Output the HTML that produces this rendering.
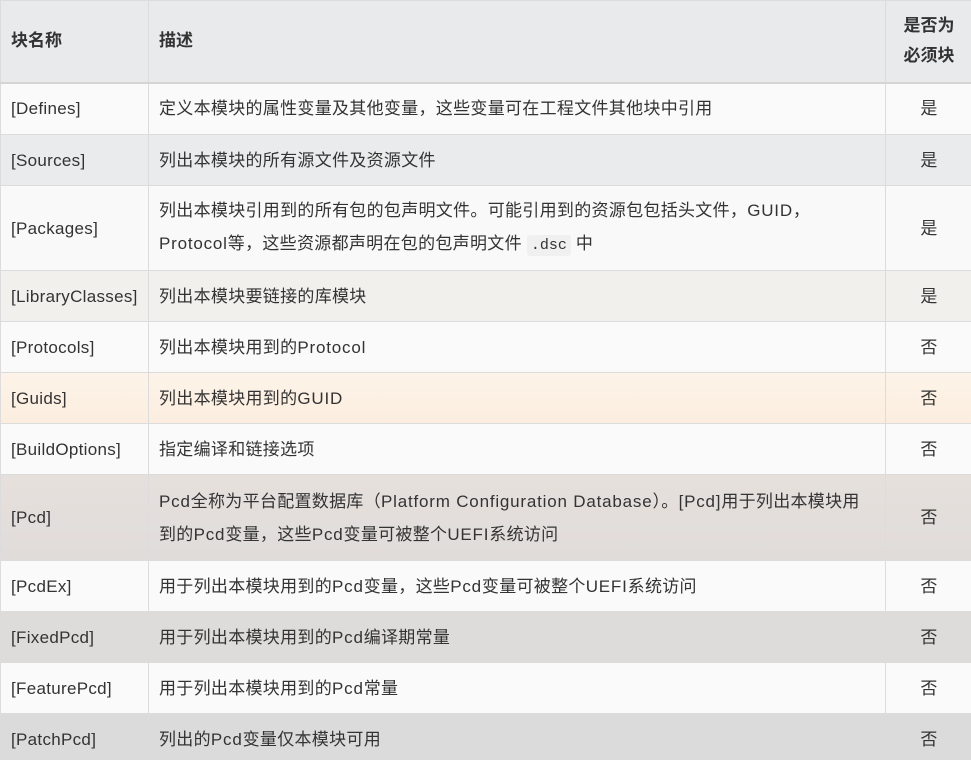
<!DOCTYPE html>
<html><head><meta charset="utf-8"><style>
html,body{margin:0;padding:0;width:971px;height:760px;overflow:hidden;background:#fafafa;}
table{border-collapse:collapse;table-layout:fixed;width:972px;font-family:"Liberation Sans","Noto Sans CJK SC",sans-serif;font-size:17px;letter-spacing:0.3px;color:#333;}
td,th{border:1px solid #dcdcdc;padding:0 10px;line-height:33px;text-align:left;vertical-align:middle;white-space:nowrap;overflow:hidden;}
th{font-weight:bold;font-size:17px;color:#333;line-height:30px;letter-spacing:0;}
tr.h th{border-bottom:2px solid #d5d5d5;}
td.c,th.c{text-align:center;padding:0;}
.l{letter-spacing:0.8px;}
code{font-family:"Liberation Mono",monospace;font-size:15px;background:#f0f0f0;border-radius:3px;padding:2px 4px;letter-spacing:0;}
</style></head><body>
<table>
<colgroup><col style="width:148px"><col style="width:737px"><col style="width:87px"></colgroup>
<tr class="h" style="height:82px;background:#e9eaec"><th>块名称</th><th>描述</th><th class="c">是否为<br>必须块</th></tr>
<tr style="height:52px;background:#fafafa"><td>[Defines]</td><td>定义本模块的属性变量及其他变量，这些变量可在工程文件其他块中引用</td><td class="c">是</td></tr>
<tr style="height:51px;background:#eaebec"><td>[Sources]</td><td>列出本模块的所有源文件及资源文件</td><td class="c">是</td></tr>
<tr style="height:85px;background:#f9f9f9"><td>[Packages]</td><td>列出本模块引用到的所有包的包声明文件。可能引用到的资源包包括头文件，<span class="l">GUID</span>，<br><span class="l">Protocol</span>等，这些资源都声明在包的包声明文件 <code>.dsc</code> 中</td><td class="c">是</td></tr>
<tr style="height:51px;background:#f2f0ed"><td>[LibraryClasses]</td><td>列出本模块要链接的库模块</td><td class="c">是</td></tr>
<tr style="height:51px;background:#fafafa"><td>[Protocols]</td><td>列出本模块用到的<span class="l">Protocol</span></td><td class="c">否</td></tr>
<tr style="height:51px;background:linear-gradient(#fdf3e8,#fbeedf)"><td>[Guids]</td><td>列出本模块用到的<span class="l">GUID</span></td><td class="c">否</td></tr>
<tr style="height:51px;background:#fafafa"><td>[BuildOptions]</td><td>指定编译和链接选项</td><td class="c">否</td></tr>
<tr style="height:86px;background:linear-gradient(#e6e0dc,#e0dcda)"><td>[Pcd]</td><td><span class="l">Pcd</span>全称为平台配置数据库（<span class="l">Platform Configuration Database</span>）。<span class="l">[Pcd]</span>用于列出本模块用<br>到的<span class="l">Pcd</span>变量，这些<span class="l">Pcd</span>变量可被整个<span class="l">UEFI</span>系统访问</td><td class="c">否</td></tr>
<tr style="height:51px;background:#fafafa"><td>[PcdEx]</td><td>用于列出本模块用到的<span class="l">Pcd</span>变量，这些<span class="l">Pcd</span>变量可被整个<span class="l">UEFI</span>系统访问</td><td class="c">否</td></tr>
<tr style="height:51px;background:#dddcdb"><td>[FixedPcd]</td><td>用于列出本模块用到的<span class="l">Pcd</span>编译期常量</td><td class="c">否</td></tr>
<tr style="height:51px;background:#fafafa"><td>[FeaturePcd]</td><td>用于列出本模块用到的<span class="l">Pcd</span>常量</td><td class="c">否</td></tr>
<tr style="height:51px;background:#dcdbdb"><td>[PatchPcd]</td><td>列出的<span class="l">Pcd</span>变量仅本模块可用</td><td class="c">否</td></tr>
</table>
</body></html>
